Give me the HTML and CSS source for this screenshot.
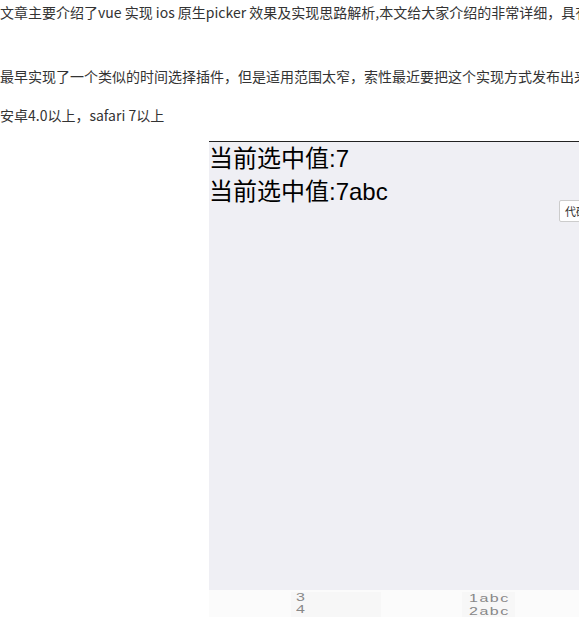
FILE: index.html
```html
<!DOCTYPE html>
<html lang="zh-CN">
<head>
    <meta charset="UTF-8">
    <title>vue ios picker</title>
    <link rel="stylesheet" href="styles.css">
</head>
<body>
    <div class="article">
        <p class="intro">文章主要介绍了vue 实现 ios 原生picker 效果及实现思路解析,本文给大家介绍的非常详细，具有一定的参考借鉴价值，需要的朋友可以参考下</p>
        <p class="para">最早实现了一个类似的时间选择插件，但是适用范围太窄，索性最近要把这个实现方式发布出来，就重写了一个高复用的vue组件。</p>
        <p class="para">安卓4.0以上，safari 7以上</p>
    </div>

    <div class="demo">
        <div class="demo-screen">
            <div class="value">当前选中值:7</div>
            <div class="value">当前选中值:7abc</div>
            <button class="code-btn">代码</button>
        </div>
        <div class="picker">
            <div class="picker-col col-num">
                <span class="item">3</span>
                <span class="item">4</span>
            </div>
            <div class="picker-col col-abc">
                <span class="item">1abc</span>
                <span class="item">2abc</span>
            </div>
        </div>
    </div>
</body>
</html>
```

FILE: styles.css
```css
* {
    box-sizing: border-box;
    margin: 0;
    padding: 0;
}

html, body {
    overflow: hidden;
}

body {
    width: 579px;
    height: 617px;
    font-family: "Noto Sans CJK SC", "Noto Sans", sans-serif;
    color: #333;
    background: #fff;
}

.article p {
    font-size: 14px;
    line-height: 20px;
    white-space: nowrap;
}

.intro {
    padding-top: 2px;
}

.para {
    margin-top: 19px;
}

.article .intro + .para {
    margin-top: 44px;
}

.demo {
    margin: 16px 0 0 209px;
    width: 420px;
}

.demo-screen {
    position: relative;
    height: 449px;
    background: #efeff4;
    border-top: 1px solid #222;
}

.value {
    font-family: "Liberation Sans", "Noto Sans CJK SC", sans-serif;
    font-size: 24px;
    line-height: 33px;
    color: #000;
}

.code-btn {
    position: absolute;
    top: 58px;
    left: 350px;
    height: 22px;
    padding: 0 5px;
    font-family: "Noto Sans CJK SC", sans-serif;
    font-size: 11px;
    color: #333;
    background: #fff;
    border: 1px solid #ccc;
    border-radius: 2px;
}

.picker {
    display: flex;
    height: 40px;
    padding-top: 2px;
    background: #fbfbfb;
}

.picker-col {
    display: flex;
    flex-direction: column;
    font-family: "Liberation Sans", sans-serif;
    font-size: 16px;
    color: #888;
    background: #f7f7f7;
}

.col-num {
    margin-left: 82px;
    width: 90px;
    padding-left: 5px;
}

.col-abc {
    margin-left: 81px;
    width: 53px;
    padding-left: 7px;
}

.item {
    display: block;
    height: 12px;
    line-height: 12px;
    transform: scaleY(0.7);
}

.col-abc .item {
    letter-spacing: 1.5px;
    height: 13px;
}
```
